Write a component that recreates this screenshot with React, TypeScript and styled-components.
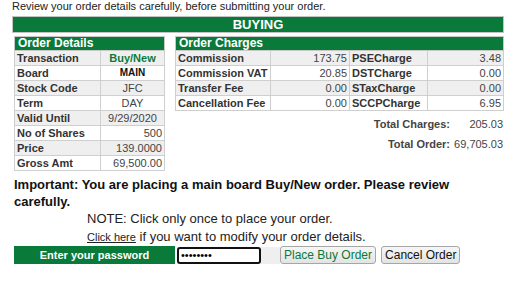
import React from "react";
import styled, { createGlobalStyle } from "styled-components";

const GREEN = "#0a7a3b";

const GlobalStyle = createGlobalStyle`
  html, body {
    margin: 0;
    padding: 0;
    background: #fff;
  }
  body {
    font-family: "Liberation Sans", Arial, sans-serif;
    color: #222;
  }
`;

const Page = styled.div`
  width: 514px;
  box-sizing: border-box;
  padding: 0 10px 0 12px;
`;

const Intro = styled.div`
  font-size: 11px;
  line-height: 13px;
  color: #222;
`;

const TitleBar = styled.div`
  margin-top: 3px;
  width: 492px;
  box-sizing: border-box;
  border: 1px solid #c4c4c4;
  background: ${GREEN};
  color: #fff;
  font-weight: bold;
  font-size: 13px;
  line-height: 15px;
  text-align: center;
`;

const Panels = styled.div`
  display: flex;
  align-items: flex-start;
  gap: 10px;
  margin-top: 3px;
  padding-left: 2px;
`;

const Column = styled.div`
  display: flex;
  flex-direction: column;
  align-items: flex-end;
`;

const Grid = styled.table<{ $width: number }>`
  width: ${(p) => p.$width}px;
  border-collapse: collapse;
  table-layout: fixed;
  font-size: 11px;
  color: #333;
  border: 1px solid #c8c8c8;
`;

const HeadCell = styled.th`
  background: ${GREEN};
  color: #fff;
  font-weight: bold;
  font-size: 12px;
  text-align: left;
  padding: 0 3px;
  height: 13px;
  line-height: 13px;
  border: 1px solid #c8c8c8;
`;

const Row = styled.tr`
  &:nth-child(odd) td {
    background: #efefef;
  }
`;

const Label = styled.td`
  font-weight: bold;
  padding: 0 2px;
  height: 14px;
  line-height: 14px;
  border: 1px solid #cfcfcf;
  white-space: nowrap;
  overflow: hidden;
`;

const Value = styled.td<{ $align?: "left" | "center" | "right"; $tone?: "green" | "strong" }>`
  padding: 0 2px;
  height: 14px;
  line-height: 14px;
  border: 1px solid #cfcfcf;
  white-space: nowrap;
  text-align: ${(p) => p.$align || "right"};
  color: ${(p) => (p.$tone === "green" ? GREEN : p.$tone === "strong" ? "#111" : "#444")};
  font-weight: ${(p) => (p.$tone ? "bold" : "normal")};
  font-size: ${(p) => (p.$tone === "strong" ? "10px" : "11px")};
`;

const Totals = styled.table`
  margin-top: 3px;
  border-collapse: collapse;
  font-size: 11px;
  color: #444;
`;

const TotalLabel = styled.td`
  font-weight: bold;
  text-align: right;
  height: 20px;
  padding: 0;
`;

const TotalValue = styled.td`
  text-align: right;
  width: 50px;
  padding: 0 1px 0 3px;
  white-space: nowrap;
`;

const Warning = styled.div`
  margin-top: 5px;
  padding-left: 2px;
  width: 480px;
  font-size: 13px;
  font-weight: bold;
  line-height: 17px;
  color: #111;
`;

const Note = styled.div`
  padding-left: 75px;
  font-size: 13px;
  line-height: 18px;
  color: #222;
`;

const BackLink = styled.a`
  font-size: 11px;
  color: #222;
  text-decoration: underline;
`;

const PasswordRow = styled.div`
  display: flex;
  align-items: center;
  height: 18px;
  padding-left: 2px;
`;

const PasswordLabel = styled.div`
  width: 161px;
  height: 18px;
  line-height: 18px;
  background: ${GREEN};
  color: #fff;
  font-weight: bold;
  font-size: 11px;
  text-align: center;
`;

const InputCell = styled.div`
  margin-left: 2px;
  width: 103px;
  height: 17px;
  background: #efefef;
  display: flex;
`;

const PasswordInput = styled.input`
  width: 84px;
  height: 17px;
  box-sizing: border-box;
  border: 2px solid #111;
  border-radius: 3px;
  padding: 0 2px;
  font-size: 11px;
  font-family: "Liberation Sans", Arial, sans-serif;
  background: #fff;
  outline: none;
`;

const Button = styled.button<{ $primary?: boolean }>`
  height: 18px;
  margin-left: ${(p) => (p.$primary ? "0" : "5px")};
  padding: 0 3px;
  border: 1px solid #a6a6a6;
  border-radius: 3px;
  background: linear-gradient(#f6f6f6, #e3e3e3);
  font-family: "Liberation Sans", Arial, sans-serif;
  font-size: 12px;
  line-height: 16px;
  color: ${(p) => (p.$primary ? GREEN : "#111")};
`;

const details: { label: string; value: string; align?: "left" | "center" | "right"; tone?: "green" | "strong" }[] = [
  { label: "Transaction", value: "Buy/New", align: "center", tone: "green" },
  { label: "Board", value: "MAIN", align: "center", tone: "strong" },
  { label: "Stock Code", value: "JFC", align: "center" },
  { label: "Term", value: "DAY", align: "center" },
  { label: "Valid Until", value: "9/29/2020", align: "center" },
  { label: "No of Shares", value: "500" },
  { label: "Price", value: "139.0000" },
  { label: "Gross Amt", value: "69,500.00" },
];

const charges = [
  ["Commission", "173.75", "PSECharge", "3.48"],
  ["Commission VAT", "20.85", "DSTCharge", "0.00"],
  ["Transfer Fee", "0.00", "STaxCharge", "0.00"],
  ["Cancellation Fee", "0.00", "SCCPCharge", "6.95"],
];

export default function App() {
  return (
    <>
      <GlobalStyle />
      <Page>
        <Intro>Review your order details carefully, before submitting your order.</Intro>
        <TitleBar>BUYING</TitleBar>
        <Panels>
          <Grid $width={150}>
            <colgroup>
              <col style={{ width: 86 }} />
              <col style={{ width: 64 }} />
            </colgroup>
            <thead>
              <tr>
                <HeadCell colSpan={2}>Order Details</HeadCell>
              </tr>
            </thead>
            <tbody>
              {details.map((d) => (
                <Row key={d.label}>
                  <Label>{d.label}</Label>
                  <Value $align={d.align} $tone={d.tone}>
                    {d.value}
                  </Value>
                </Row>
              ))}
            </tbody>
          </Grid>
          <Column>
            <Grid $width={328}>
              <colgroup>
                <col style={{ width: 95 }} />
                <col style={{ width: 79 }} />
                <col style={{ width: 78 }} />
                <col style={{ width: 76 }} />
              </colgroup>
              <thead>
                <tr>
                  <HeadCell colSpan={4}>Order Charges</HeadCell>
                </tr>
              </thead>
              <tbody>
                {charges.map(([a, b, c, d]) => (
                  <Row key={a}>
                    <Label>{a}</Label>
                    <Value>{b}</Value>
                    <Label>{c}</Label>
                    <Value>{d}</Value>
                  </Row>
                ))}
              </tbody>
            </Grid>
            <Totals>
              <tbody>
                <tr>
                  <TotalLabel>Total Charges:</TotalLabel>
                  <TotalValue>205.03</TotalValue>
                </tr>
                <tr>
                  <TotalLabel>Total Order:</TotalLabel>
                  <TotalValue>69,705.03</TotalValue>
                </tr>
              </tbody>
            </Totals>
          </Column>
        </Panels>
        <Warning>Important: You are placing a main board Buy/New order. Please review carefully.</Warning>
        <Note>NOTE: Click only once to place your order.</Note>
        <Note>
          <BackLink href="#">Click here</BackLink> if you want to modify your order details.
        </Note>
        <PasswordRow>
          <PasswordLabel>Enter your password</PasswordLabel>
          <InputCell>
            <PasswordInput type="password" defaultValue="12345678" readOnly />
          </InputCell>
          <Button $primary>Place Buy Order</Button>
          <Button>Cancel Order</Button>
        </PasswordRow>
      </Page>
    </>
  );
}
